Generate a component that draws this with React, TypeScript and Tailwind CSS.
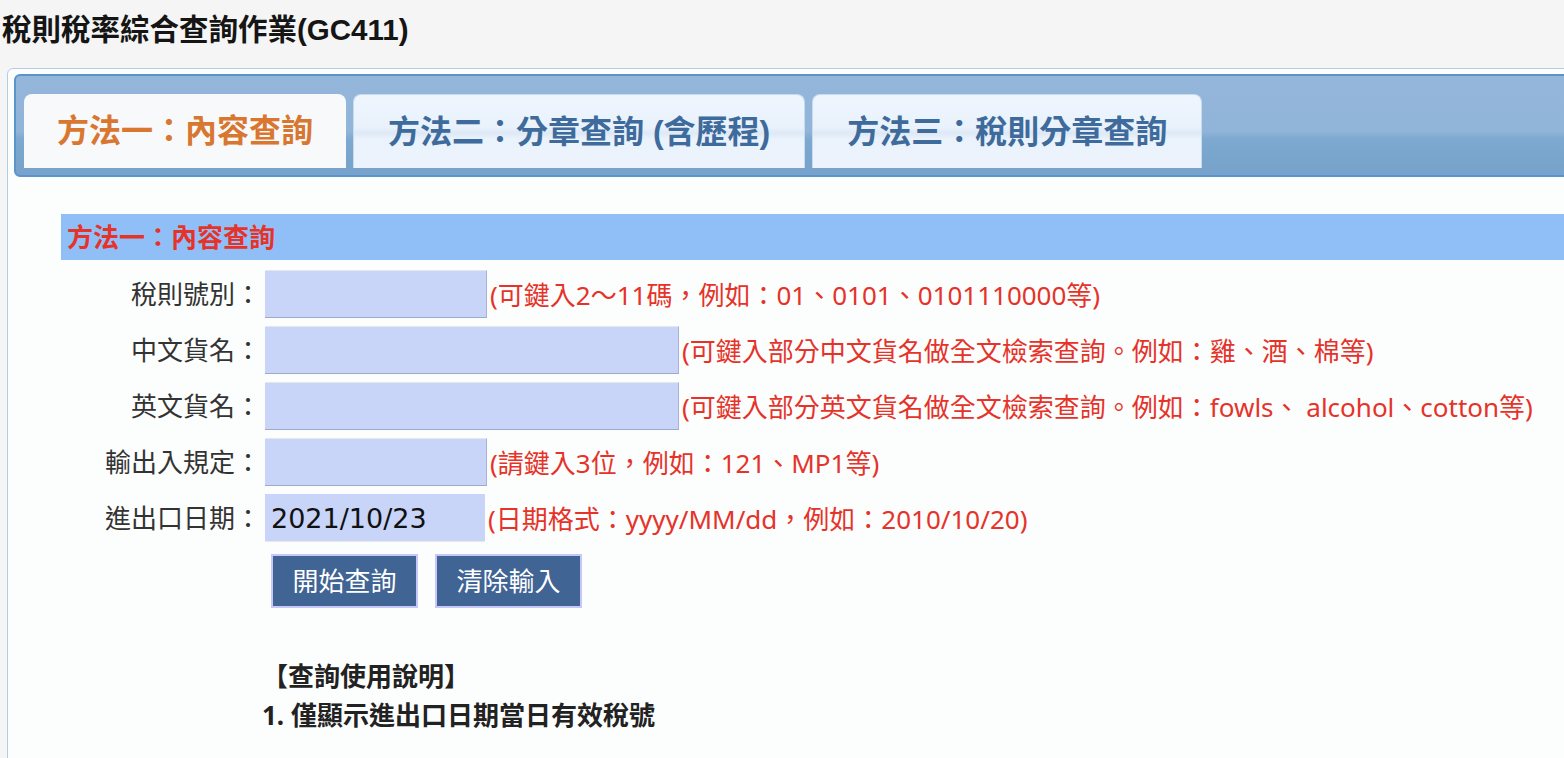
import React from 'react';

const cjk = "font-['Noto_Sans','Noto_Sans_CJK_TC',sans-serif]";

interface FieldRow {
  label: string;
  width: string;
  value?: string;
  hint: string;
}

const rows: FieldRow[] = [
  { label: '稅則號別：', width: 'w-[222px]', hint: '(可鍵入2～11碼，例如：01、0101、0101110000等)' },
  { label: '中文貨名：', width: 'w-[414px]', hint: '(可鍵入部分中文貨名做全文檢索查詢。例如：雞、酒、棉等)' },
  { label: '英文貨名：', width: 'w-[414px]', hint: '(可鍵入部分英文貨名做全文檢索查詢。例如：fowls、 alcohol、cotton等)' },
  { label: '輸出入規定：', width: 'w-[222px]', hint: '(請鍵入3位，例如：121、MP1等)' },
  { label: '進出口日期：', width: 'w-[220px]', value: '2021/10/23', hint: '(日期格式：yyyy/MM/dd，例如：2010/10/20)' },
];

const tabs = ['方法一：內容查詢', '方法二：分章查詢 (含歷程)', '方法三：稅則分章查詢'];

const App: React.FC = () => {
  return (
    <div className={`w-[1564px] h-[758px] overflow-hidden bg-[#f5f5f5] ${cjk}`}>
      {/* 頁面標題 */}
      <h1 className="h-[68px] pl-[2px] pt-[13px] text-[29.5px] leading-[34px] font-bold text-[#151515] font-['Liberation_Sans','Noto_Sans_CJK_TC',sans-serif]">
        稅則稅率綜合查詢作業(GC411)
      </h1>

      <div className="ml-[7px] w-[1620px] h-[720px] border border-[#b3cde8] rounded-tl-[6px] bg-[#fcfdfd] pt-[5px] pl-[6px]">
        {/* 頁籤列 */}
        <div className="h-[103px] border-2 border-[#5b94cc] rounded-[6px] bg-[linear-gradient(180deg,#94b6da_0%,#91b4d9_56%,#7da8cf_64%,#76a2cb_100%)] pt-[18px] pl-[8px] flex gap-[7px]">
          {tabs.map((t, i) => (
            <div
              key={t}
              className={
                i === 0
                  ? "h-[74px] px-[33px] flex items-center rounded-t-[8px] bg-[#f7f9fb] text-[#d9762f] text-[32px] font-bold font-['Liberation_Sans','Noto_Sans_CJK_TC',sans-serif]"
                  : "h-[74px] px-[34px] flex items-center rounded-t-[8px] border border-b-0 border-[#c8dcef] bg-[linear-gradient(180deg,#eef5fd_0%,#e9f2fc_45%,#dde9f6_52%,#eaf2fc_60%,#edf4fd_100%)] text-[#3e6b9b] text-[32px] font-bold font-['Liberation_Sans','Noto_Sans_CJK_TC',sans-serif]"
              }
            >
              {t}
            </div>
          ))}
        </div>

        {/* 區塊標題 */}
        <div className="mt-[37px] ml-[47px] h-[46px] bg-[#90bff8] pl-[6px] flex items-center text-[26px] font-bold text-[#e5332a]">
          方法一：內容查詢
        </div>

        {/* 查詢表單 */}
        <div className="ml-[47px] mt-[10px] flex flex-col gap-[8px]">
          {rows.map((r) => (
            <div key={r.label} className="h-[48px] flex items-center">
              <div className="w-[200px] mr-[4px] text-right text-[26px] text-[#333333]">{r.label}</div>
              <div
                className={`${r.width} h-[48px] bg-[#c8d4f8] flex items-center pl-[6px] pt-[3px] text-[27px] text-[#111] font-['DejaVu_Sans',sans-serif] ${
                  r.value ? 'border-b border-[#e6e9f0]' : 'border-t border-t-[#e6e7ea] border-r border-r-[#a6b2cf] border-b border-b-[#9eaac6]'
                }`}
              >
                {r.value}
              </div>
              <div className="ml-[3px] pt-[2px] text-[26px] text-[#e5332a] whitespace-nowrap">{r.hint}</div>
            </div>
          ))}
        </div>

        {/* 按鈕 */}
        <div className="ml-[257px] mt-[12px] flex gap-[17px]">
          <button className="w-[147px] h-[54px] bg-[#406494] border-2 border-[#c8c8f8] text-white text-[26px]">開始查詢</button>
          <button className="w-[147px] h-[54px] bg-[#406494] border-2 border-[#c8c8f8] text-white text-[26px]">清除輸入</button>
        </div>

        {/* 使用說明 */}
        <div className="ml-[248px] mt-[49px] text-[26px] leading-[39px] font-bold text-[#222]">
          <div>【查詢使用說明】</div>
          <div>1. 僅顯示進出口日期當日有效稅號</div>
        </div>
      </div>
    </div>
  );
};

export default App;
